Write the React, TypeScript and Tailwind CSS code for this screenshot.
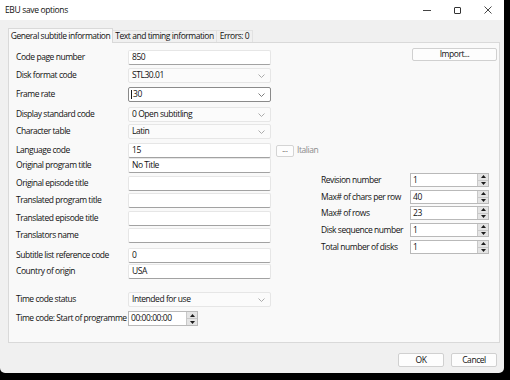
import React from 'react'

function Chevron({ dark }: { dark?: boolean }) {
  return (
    <svg width="7" height="4" viewBox="0 0 7 4" className="shrink-0">
      <path d="M0.5 0.5 L3.5 3.5 L6.5 0.5" fill="none" stroke={dark ? '#6e6e6e' : '#a3a3a3'} strokeWidth="0.9" />
    </svg>
  )
}

function SpinArrows() {
  return (
    <div className="w-[11px] h-full flex flex-col border-l border-[#c8c8c8]">
      <div className="flex-1 bg-[#e4e4e4] border-b border-[#c8c8c8] flex items-center justify-center">
        <svg width="5" height="3" viewBox="0 0 5 3"><path d="M0 3 L2.5 0 L5 3 Z" fill="#1b1b1b" /></svg>
      </div>
      <div className="flex-1 bg-[#e4e4e4] flex items-center justify-center">
        <svg width="5" height="3" viewBox="0 0 5 3"><path d="M0 0 L2.5 3 L5 0 Z" fill="#1b1b1b" /></svg>
      </div>
    </div>
  )
}

function Spin({ value, w }: { value: string; w: string }) {
  return (
    <div className={`${w} h-[14px] shrink-0 bg-white border border-[#b9b9b9] flex items-stretch`}>
      <div className="flex-1 pl-[2px] flex items-center">{value}</div>
      <SpinArrows />
    </div>
  )
}

function TextBox({ value }: { value?: string }) {
  return (
    <div className="w-[143px] h-[15px] shrink-0 bg-white border border-[#e6e6e6] border-b-[#a2a2a2] rounded-[2px] flex items-center px-[3px]">
      {value}
    </div>
  )
}

function Combo({ value, focused }: { value: string; focused?: boolean }) {
  return (
    <div
      className={
        focused
          ? 'w-[143px] h-[15px] shrink-0 bg-white border border-[#8a8a8a] rounded-[2px] flex items-center justify-between pl-[2px] pr-[5px]'
          : 'w-[143px] h-[15px] shrink-0 bg-[#fbfbfb] border border-[#e6e6e6] rounded-[2px] flex items-center justify-between pl-[3px] pr-[5px]'
      }
    >
      <span className="flex items-center">
        {focused && <span className="w-px h-[9px] bg-[#1b1b1b] mr-[1px]" />}
        {value}
      </span>
      <Chevron dark={focused} />
    </div>
  )
}

function Row({ label, mt, children }: { label: string; mt: string; children: React.ReactNode }) {
  return (
    <div className={`flex items-center h-[15px] ${mt}`}>
      <div className="w-[112px] shrink-0 whitespace-nowrap">{label}</div>
      {children}
    </div>
  )
}

function SpinRow({ label, value, mt }: { label: string; value: string; mt: string }) {
  return (
    <div className={`flex items-center ${mt}`}>
      <div className="w-[89px] whitespace-nowrap">{label}</div>
      <Spin value={value} w="w-[79px]" />
    </div>
  )
}

export default function App() {
  return (
    <div className="w-[510px] h-[380px] bg-black overflow-hidden font-['Open_Sans',sans-serif] text-[8.5px] tracking-[-0.45px] text-[#111]">
      <div className="w-[504px] h-[373px] bg-[#f0f0f0] flex flex-col rounded-b-[5px] overflow-hidden">
        {/* Title bar */}
        <div className="h-[20px] bg-white flex items-center justify-between">
          <span className="pl-[5px] text-[8.5px] tracking-[-0.35px]">EBU save options</span>
          <div className="flex items-center h-full">
            <div className="w-[31px] flex justify-center">
              <div className="w-[8px] h-px bg-[#444]" />
            </div>
            <div className="w-[31px] flex justify-center">
              <div className="w-[7px] h-[7px] border border-[#333] rounded-[1px]" />
            </div>
            <div className="w-[31px] flex justify-center pr-[2px]">
              <svg width="8" height="8" viewBox="0 0 8 8">
                <path d="M0.5 0.5 L7.5 7.5 M7.5 0.5 L0.5 7.5" stroke="#333" strokeWidth="0.9" />
              </svg>
            </div>
          </div>
        </div>

        {/* Body */}
        <div className="flex-1 flex flex-col pl-[8px] pr-[4px] pt-[8px]">
          {/* Tabs */}
          <div className="flex items-end h-[14px]">
            <div className="relative z-10 w-[105px] h-[15px] mb-[-1px] bg-[#f9f9f9] border border-b-0 border-[#d9d9d9] flex items-center justify-center whitespace-nowrap">
              General subtitle information
            </div>
            <div className="w-[104px] h-[12px] border-t border-r border-[#e2e2e2] flex items-center justify-center whitespace-nowrap">
              Text and timing information
            </div>
            <div className="w-[36px] h-[12px] border-t border-r border-[#e2e2e2] flex items-center justify-center whitespace-nowrap">
              Errors: 0
            </div>
          </div>

          {/* Panel */}
          <div className="h-[301px] bg-[#f9f9f9] border border-[#d9d9d9] flex">
            <div className="w-[292px] shrink-0 pl-[7px] pt-[7px] flex flex-col">
              <Row label="Code page number" mt="mt-0"><TextBox value="850" /></Row>
              <Row label="Disk format code" mt="mt-[3px]"><Combo value="STL30.01" /></Row>
              <Row label="Frame rate" mt="mt-[4px]"><Combo value="30" focused /></Row>
              <Row label="Display standard code" mt="mt-[5px]"><Combo value="0 Open subtitling" /></Row>
              <Row label="Character table" mt="mt-[2px]"><Combo value="Latin" /></Row>
              <Row label="Language code" mt="mt-[4px]">
                <TextBox value="15" />
                <div className="shrink-0 ml-[5px] w-[18px] h-[12px] bg-[#fdfdfd] border border-[#d4d4d4] rounded-[2px] flex items-center justify-center text-[7px] tracking-normal leading-none pb-[2px]">
                  ...
                </div>
                <span className="shrink-0 ml-[3px] text-[#8c8c8c]">Italian</span>
              </Row>
              <Row label="Original program title" mt="mt-0"><TextBox value="No Title" /></Row>
              <Row label="Original episode title" mt="mt-[3px]"><TextBox /></Row>
              <Row label="Translated program title" mt="mt-[2px]"><TextBox /></Row>
              <Row label="Translated episode title" mt="mt-[3px]"><TextBox /></Row>
              <Row label="Translators name" mt="mt-[2px]"><TextBox /></Row>
              <Row label="Subtitle list reference code" mt="mt-[5px]"><TextBox value="0" /></Row>
              <Row label="Country of origin" mt="mt-px"><TextBox value="USA" /></Row>
              <Row label="Time code status" mt="mt-[13px]"><Combo value="Intended for use" /></Row>
              <Row label="Time code: Start of programme" mt="mt-[4px]">
                <div className="w-[70px] h-[15px] shrink-0 bg-white border border-[#b9b9b9] flex items-stretch">
                  <div className="flex-1 pl-[2px] flex items-center">00:00:00:00</div>
                  <SpinArrows />
                </div>
              </Row>
            </div>

            <div className="flex-1 flex flex-col items-end pt-[5px]">
              <div className="mr-[2px] w-[85px] h-[13px] bg-[#fdfdfd] border border-[#d0d0d0] rounded-[2px] flex items-center justify-center">
                Import...
              </div>
              <div className="mr-[10px] mt-[112px] flex flex-col">
                <SpinRow label="Revision number" value="1" mt="mt-0" />
                <SpinRow label="Max# of chars per row" value="40" mt="mt-[3px]" />
                <SpinRow label="Max# of rows" value="23" mt="mt-[2px]" />
                <SpinRow label="Disk sequence number" value="1" mt="mt-[3px]" />
                <SpinRow label="Total number of disks" value="1" mt="mt-[3px]" />
              </div>
            </div>
          </div>

          {/* Footer */}
          <div className="flex justify-end gap-[7px] mt-[10px] mr-[3px]">
            <div className="w-[46px] h-[14px] bg-[#fdfdfd] border border-[#d0d0d0] rounded-[2px] flex items-center justify-center">
              OK
            </div>
            <div className="w-[46px] h-[14px] bg-[#fdfdfd] border border-[#d0d0d0] rounded-[2px] flex items-center justify-center">
              Cancel
            </div>
          </div>
        </div>
      </div>
    </div>
  )
}
